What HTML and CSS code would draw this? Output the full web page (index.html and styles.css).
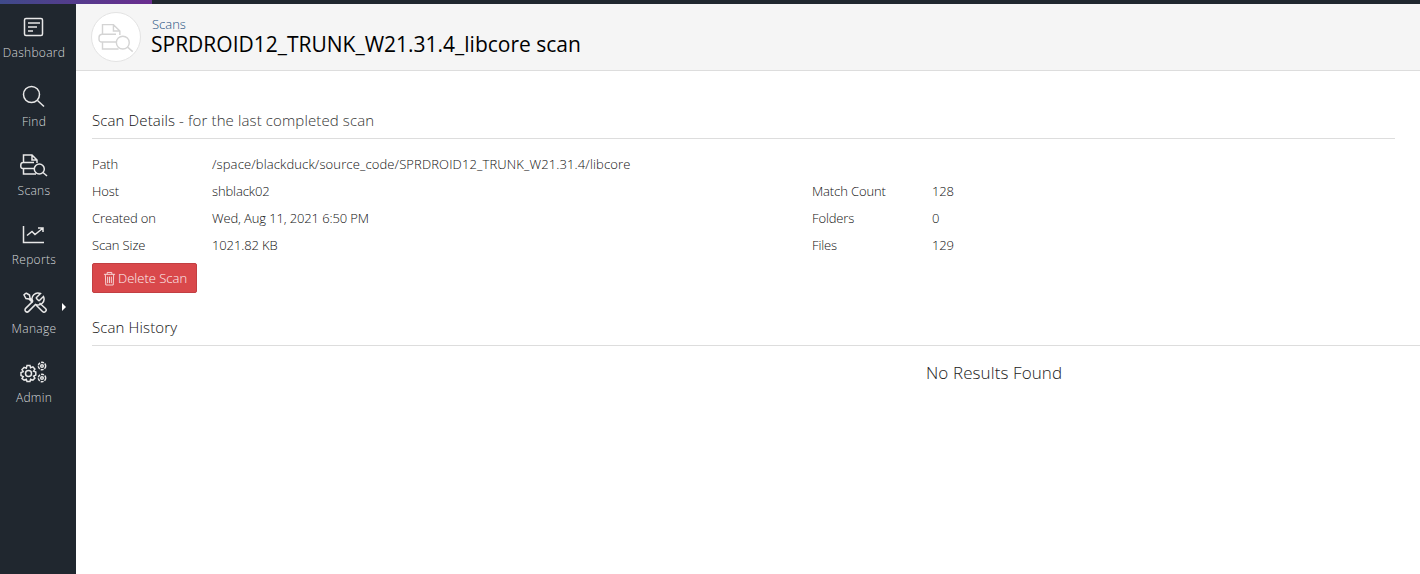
FILE: index.html
```html
<!DOCTYPE html>
<html lang="en">

<head>
    <meta charset="UTF-8">
    <title>SPRDROID12_TRUNK_W21.31.4_libcore scan</title>
    <link rel="stylesheet" href="styles.css">
</head>

<body>
    <div class="topbar"><div class="topbar-accent"></div></div>

    <div class="layout">
        <nav class="sidebar">
            <a class="nav-item">
                <svg class="nav-icon" viewBox="0 0 28 24"><rect x="4.500" y="3.500" width="18" height="17" rx="1.500"/><path d="M8 8h12M8 12h9M8 16h5"/></svg>
                <span>Dashboard</span>
            </a>
            <a class="nav-item">
                <svg class="nav-icon" viewBox="0 0 28 24"><circle cx="11.500" cy="10.500" r="8"/><path d="M17.500 16.500l6.500 6"/></svg>
                <span>Find</span>
            </a>
            <a class="nav-item">
                <svg class="nav-icon" viewBox="0 0 28 24"><path d="M3.500 9V2H12l5 5v3M12 2v5h5M14 9.500H3A2.500 2.500 0 0 0 .8 12v1.500a2 2 0 0 0 2 2H14M3.500 15.500V21H16"/><circle cx="19.300" cy="16" r="5"/><path d="M23 19.500l4 3.500"/></svg>
                <span>Scans</span>
            </a>
            <a class="nav-item">
                <svg class="nav-icon" viewBox="0 0 28 24"><path d="M3.500 4v16.500H24"/><path d="M7 13.500l5-4 3 3 7.500-6M18 6h5v4"/></svg>
                <span>Reports</span>
            </a>
            <a class="nav-item">
                <svg class="nav-icon" viewBox="0 0 28 24"><path d="M16.700 6.300a1 1 0 0 0 0 1.400l1.600 1.600a1 1 0 0 0 1.400 0l3.770-3.770a6 6 0 0 1-7.940 7.940l-6.910 6.910a2.120 2.120 0 0 1-3-3l6.910-6.910a6 6 0 0 1 7.940-7.940l-3.760 3.760z"/><path d="M6 2L4 4l2 3.500 3 .5 3.500 3.500M6 2l3.500 2 .5 3 3 3M16 14l6.500 6.500a2.100 2.100 0 0 0 3-3L19.500 12"/></svg>
                <span>Manage</span>
                <i class="caret"></i>
            </a>
            <a class="nav-item">
                <svg class="nav-icon" viewBox="0 0 28 24"><circle cx="8.500" cy="13.500" r="3"/><path d="M7 5.500h3l.6 2.300 2.300-.9 2 2.200-1.300 2 2.200 1v3l-2.200.9 1.300 2.100-2 2.100-2.300-1-.6 2.300H7l-.7-2.300-2.200 1L2 18.600l1.200-2.100-2.200-.9v-3l2.200-1L2 9.600l2.100-2.200 2.200.9z"/><circle cx="22" cy="6" r="3.700" stroke-dasharray="3 1"/><circle cx="22" cy="6" r="1.300"/><circle cx="22" cy="18" r="3.700" stroke-dasharray="3 1"/><circle cx="22" cy="18" r="1.300"/></svg>
                <span>Admin</span>
            </a>
        </nav>

        <main class="content">
            <header class="page-header">
                <div class="header-icon">
                    <svg viewBox="0 0 28 24"><path d="M3.500 9V2H12l5 5v3M12 2v5h5M14 9.500H3A2.500 2.500 0 0 0 .8 12v1.500a2 2 0 0 0 2 2H14M3.500 15.500V21H16"/><circle cx="19.300" cy="16" r="5"/><path d="M23 19.500l4 3.500"/></svg>
                </div>
                <div class="header-text">
                    <a class="breadcrumb">Scans</a>
                    <h1>SPRDROID12_TRUNK_W21.31.4_libcore scan</h1>
                </div>
            </header>

            <section class="details">
                <h2 class="section-title">Scan Details <small>- for the last completed scan</small></h2>
                <div class="details-grid">
                    <div class="detail-col">
                        <div class="row"><label>Path</label><span class="path-value">/space/blackduck/source_code/SPRDROID12_TRUNK_W21.31.4/libcore</span></div>
                        <div class="row"><label>Host</label><span>shblack02</span></div>
                        <div class="row"><label>Created on</label><span>Wed, Aug 11, 2021 6:50 PM</span></div>
                        <div class="row"><label>Scan Size</label><span>1021.82 KB</span></div>
                    </div>
                    <div class="detail-col">
                        <div class="row"></div>
                        <div class="row"><label>Match Count</label><span>128</span></div>
                        <div class="row"><label>Folders</label><span>0</span></div>
                        <div class="row"><label>Files</label><span>129</span></div>
                    </div>
                </div>
                <button class="btn-danger">
                    <svg viewBox="0 0 14 16"><path d="M1 3.500h12M4.500 3.500V1.500h5v2M2.500 3.500l.5 11.500h8l.5-11.500M5 6v7M7 6v7M9 6v7"/></svg>
                    Delete Scan
                </button>
            </section>

            <section class="history">
                <h2 class="section-title">Scan History</h2>
                <p class="empty">No Results Found</p>
            </section>
        </main>
    </div>
</body>

</html>
```

FILE: styles.css
```css
* {
    box-sizing: border-box;
}

html, body {
    height: 100%;
}

body {
    margin: 0;
    display: flex;
    flex-direction: column;
    overflow: hidden;
    background-color: white;
    color: #111;
    font-family: "Open Sans", sans-serif;
    font-size: 13px;
}

.topbar {
    height: 4px;
    background-color: #20272f;
}

.topbar-accent {
    width: 152px;
    height: 4px;
    background: linear-gradient(to right, #3f4a8a, #6a2d8f);
}

.layout {
    flex: 1;
    display: flex;
    min-height: 0;
}

.sidebar {
    width: 76px;
    flex-shrink: 0;
    background-color: #20272f;
    padding: 7px 8px 0 0;
}

.nav-item {
    position: relative;
    height: 69px;
    display: flex;
    flex-direction: column;
    align-items: center;
    padding-top: 4px;
    color: #d5d7da;
    font-size: 12px;
    font-weight: 300;
    line-height: 16px;
    letter-spacing: 0.3px;
}

.nav-icon {
    width: 28px;
    height: 24px;
    margin-bottom: 6px;
    fill: none;
    stroke: #e8e8e8;
    stroke-width: 1.500;
}

.caret {
    position: absolute;
    top: 16px;
    left: 62px;
    border-left: 4px solid white;
    border-top: 4px solid transparent;
    border-bottom: 4px solid transparent;
}

.content {
    flex: 1;
    min-width: 0;
}

.page-header {
    height: 67px;
    display: flex;
    align-items: center;
    gap: 10px;
    padding-left: 15px;
    background-color: #f5f5f5;
    border-bottom: 1px solid #ddd;
}

.header-icon {
    width: 50px;
    height: 50px;
    display: flex;
    align-items: center;
    justify-content: center;
    background-color: white;
    border: 1px solid #e3e3e3;
    border-radius: 50%;
}

.header-icon svg {
    width: 36px;
    height: 31px;
    fill: none;
    stroke: #d4d4d4;
    stroke-width: 1.100;
}

.header-text {
    padding-bottom: 2px;
}

.breadcrumb {
    display: block;
    padding-left: 1px;
    color: #1f5080;
    font-size: 13px;
    font-weight: 300;
    line-height: 14px;
}

h1 {
    margin: 1px 0 0;
    color: #000;
    font-size: 21px;
    font-weight: 400;
    line-height: 24px;
}

.details {
    padding: 39px 25px 0 16px;
}

.section-title {
    margin: 0;
    padding-bottom: 8px;
    border-bottom: 1px solid #ddd;
    color: #111;
    font-size: 15px;
    font-weight: 300;
    line-height: 20px;
    letter-spacing: 0.12px;
}

.section-title small {
    color: #333;
    font-size: 15px;
    font-weight: 300;
}

.details-grid {
    display: flex;
    padding-top: 11px;
}

.detail-col {
    flex: 1;
}

.detail-col:first-child {
    flex: 0 0 720px;
}

.row {
    display: flex;
    height: 27px;
    align-items: center;
    color: #111;
    font-size: 13px;
    font-weight: 300;
    letter-spacing: -0.12px;
}

.row .path-value {
    letter-spacing: 0.13px;
}

.row label {
    width: 120px;
    flex-shrink: 0;
}

.btn-danger {
    display: flex;
    align-items: center;
    gap: 2px;
    height: 30px;
    margin-top: 5px;
    padding: 0 9px 0 10px;
    background-color: #d9484b;
    border: 1px solid #c23f42;
    border-radius: 2px;
    color: #fdf0f0;
    font-family: "Open Sans", sans-serif;
    font-size: 13px;
    font-weight: 300;
}

.btn-danger svg {
    width: 13px;
    height: 15px;
    fill: none;
    stroke: #f7dddd;
    stroke-width: 1;
}

.history {
    padding: 24px 0 0 16px;
}

.empty {
    margin: 15px 0 0;
    padding-left: 834px;
    color: #222;
    font-size: 17px;
    font-weight: 300;
    line-height: 24px;
    letter-spacing: 0.1px;
}
```
